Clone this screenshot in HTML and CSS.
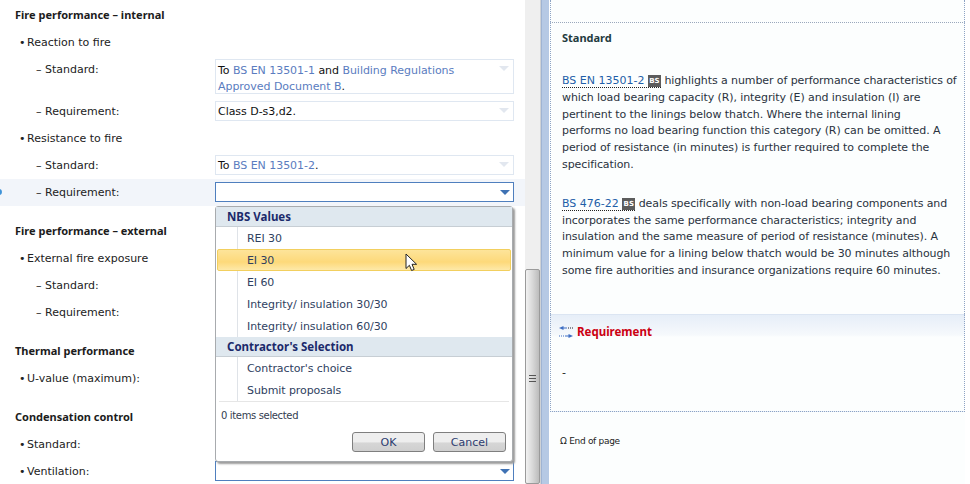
FILE: index.html
```html
<!DOCTYPE html>
<html lang="en">
<head>
<meta charset="utf-8">
<title>Fire performance</title>
<link rel="stylesheet" href="styles.css">
</head>
<body>
<div class="app">
  <main class="form-pane">
    <section class="group first">
      <h2 class="row title">Fire performance – internal</h2>
      <div class="row"><span class="lvl1"><i class="dot">•</i> Reaction to fire</span></div>
      <div class="row"><span class="lvl2">– Standard:</span><div class="field tall">
        <span>To <a>BS EN 13501-1</a> and <a>Building Regulations Approved Document B</a>.</span><i class="arrow"></i></div></div>
      <div class="row"><span class="lvl2">– Requirement:</span><div class="field"><span>Class D-s3,d2.</span><i class="arrow"></i></div></div>
      <div class="row"><span class="lvl1"><i class="dot">•</i> Resistance to fire</span></div>
      <div class="row"><span class="lvl2">– Standard:</span><div class="field"><span>To <a>BS EN 13501-2</a>.</span><i class="arrow"></i></div></div>
      <div class="row active"><b class="marker"></b><span class="lvl2">– Requirement:</span><div class="field focus"><i class="arrow"></i></div></div>
    </section>
    <section class="group">
      <h2 class="row title">Fire performance – external</h2>
      <div class="row"><span class="lvl1"><i class="dot">•</i> External fire exposure</span></div>
      <div class="row"><span class="lvl2">– Standard:</span></div>
      <div class="row"><span class="lvl2">– Requirement:</span></div>
    </section>
    <section class="group">
      <h2 class="row title">Thermal performance</h2>
      <div class="row"><span class="lvl1"><i class="dot">•</i> U-value (maximum):</span></div>
    </section>
    <section class="group">
      <h2 class="row title">Condensation control</h2>
      <div class="row"><span class="lvl1"><i class="dot">•</i> Standard:</span></div>
      <div class="row"><span class="lvl1"><i class="dot">•</i> Ventilation:</span><div class="field focus"><i class="arrow"></i></div></div>
    </section>

    <div class="popup">
      <div class="pop-head">NBS Values</div>
      <ul class="pop-list">
        <li>REI 30</li>
        <li class="hot">EI 30</li>
        <li>EI 60</li>
        <li>Integrity/ insulation 30/30</li>
        <li>Integrity/ insulation 60/30</li>
      </ul>
      <div class="pop-head">Contractor's Selection</div>
      <ul class="pop-list">
        <li>Contractor's choice</li>
        <li>Submit proposals</li>
      </ul>
      <div class="pop-foot">
        <div class="count">0 items selected</div>
        <div class="buttons"><button>OK</button><button>Cancel</button></div>
      </div>
    </div>
    <svg class="cursor" width="13" height="20" viewBox="0 0 13 20"><path d="M1 1v14.500l3.400-3.200 2.200 5.200 2.600-1.100-2.200-5.100h4.600z" fill="#fff" stroke="#222" stroke-width="1"/></svg>
  </main>

  <div class="track"><div class="thumb"><span class="grip"></span></div></div>
  <div class="splitter"></div>

  <aside class="doc-pane">
    <div class="panel spacer"></div>
    <div class="panel std">
      <h3>Standard</h3>
      <p><a class="ref">BS EN 13501-2 <span class="bs">BS</span></a> highlights a number of performance characteristics of<br>which load bearing capacity (R), integrity (E) and insulation (I) are<br>pertinent to the linings below thatch. Where the internal lining<br>performs no load bearing function this category (R) can be omitted. A<br>period of resistance (in minutes) is further required to complete the<br>specification.</p>
      <p><a class="ref">BS 476-22 <span class="bs">BS</span></a> deals specifically with non-load bearing components and<br>incorporates the same performance characteristics; integrity and<br>insulation and the same measure of period of resistance (minutes). A<br>minimum value for a lining below thatch would be 30 minutes although<br>some fire authorities and insurance organizations require 60 minutes.</p>
    </div>
    <div class="panel req">
      <div class="req-head">
        <svg width="14" height="12" viewBox="0 0 14 12"><path d="M4.500 0 0 2l4.500 2V2.500H8v-1H4.500z" fill="#3f6fc4"/><path d="M9 2h1m1 0h1m1 0h1" stroke="#223" stroke-width="1"/><path d="M9.500 8l4.500 2-4.500 2v-1.500H6v-1h3.500z" fill="#3f6fc4"/><path d="M0 10h1m1 0h1m1 0h1" stroke="#3f6fc4" stroke-width="1"/></svg>
        <span>Requirement</span>
      </div>
      <p class="dash">-</p>
    </div>
    <div class="eop">Ω End of page</div>
  </aside>
</div>
</body>
</html>
```
FILE: styles.css
```css
* { box-sizing: border-box; }
html, body { margin: 0; height: 484px; overflow: hidden; background: #fff; }
body { font-family: "DejaVu Sans", sans-serif; font-size: 11px; color: #222; }
.app { display: flex; height: 484px; }

.form-pane { position: relative; flex: 0 0 525px; height: 484px; overflow: hidden; background: #fff; padding-top: 2px; }
.group { margin-top: 12px; }
.group.first { margin-top: 0; }
.row { position: relative; display: grid; grid-template-columns: 215px 299px; padding: 4px 0 3px; min-height: 27px; margin: 0; line-height: 20px; }
.row.active { background: #f2f5fa; }
.row.title { display: block; font-family: "Noto Sans", sans-serif; font-size: 11px; font-weight: bold; padding: 3px 0 4px 15px; color: #1c1c1c; }
.lvl1 { padding-left: 19px; }
.lvl2 { padding-left: 36px; }
.dot { font-style: normal; margin-right: -2px; }
.marker { position: absolute; left: -3px; top: 10px; width: 5px; height: 6px; border-radius: 50%; background: #3f93d8; }

.field { position: relative; height: 20px; margin: -1px 0 1px; border: 1px solid #dfe7f1; padding: 0 20px 0 2px; line-height: 20px; letter-spacing: -0.04px; color: #111; background: #fff; }
.field.tall { height: 35px; line-height: 16px; padding-top: 3px; }
.field a { color: #5a7cc0; }
.field.focus { border-color: #4f7fbe; }
.arrow { position: absolute; right: 4px; top: 6px; width: 0; height: 0; border: 5px solid transparent; border-top: 5px solid #e2e7ef; border-bottom: 0; }
.field.focus .arrow { border-top-color: #3f72b4; right: 3px; top: 7px; }

.popup { position: absolute; left: 215px; top: 206px; width: 298px; height: 256px; background: #fff; border: 1px solid #a8abae; border-radius: 3px; box-shadow: 2px 2px 2px #9c9c9c; color: #2f3f5f; }
.pop-head { height: 20px; padding-left: 11px; line-height: 20px; background: #dfe8ef; border-bottom: 1px solid #c7ced4; font-family: "Noto Sans", sans-serif; font-size: 11.5px; font-weight: bold; color: #1b2a6b; }
.pop-list { list-style: none; margin: 0; padding: 0; }
.pop-list li { position: relative; height: 22px; margin-left: 21px; padding-left: 9px; line-height: 24px; letter-spacing: -0.08px; border-left: 1px solid #dfe3e8; }
.pop-list li.hot { margin-left: 1px; margin-right: 1px; padding-left: 29px; line-height: 22px; border: 1px solid #f2cf5e; border-radius: 2px; background: linear-gradient(#fde49a, #fdd97a 60%, #fee9a8); }
.pop-foot { margin: 0 3px; border-top: 1px solid #e6e6e6; padding-top: 6px; }
.count { font-size: 10px; padding-left: 2px; height: 16px; line-height: 16px; letter-spacing: -0.35px; color: #333d50; }
.buttons { display: flex; justify-content: flex-end; gap: 8px; margin-top: 8px; padding-right: 3px; }
.buttons button { width: 73px; height: 20px; padding: 0; font: 11px "DejaVu Sans", sans-serif; color: #2c3c70; border: 1px solid #7f7f7f; border-radius: 3px; background: linear-gradient(#eee, #eee 50%, #d6d6d6 55%, #cfcfcf); }
.cursor { position: absolute; left: 405px; top: 253px; }

.track { position: relative; flex: 0 0 16px; background: #efefef; border-right: 1px solid #cfd2d6; }
.thumb { position: absolute; left: 0; top: 269px; width: 15px; height: 215px; border: 1px solid #9a9a9a; border-radius: 2px; background: linear-gradient(90deg, #f2f2f2, #d8d8d8 50%, #bcbcbc); display: flex; align-items: center; justify-content: center; padding-top: 4px; }
.grip { width: 7px; height: 7px; border-top: 1px solid #555; border-bottom: 1px solid #555; background: linear-gradient(#555, #555) center/100% 1px no-repeat; }
.splitter { flex: 0 0 8px; background: #b6c9e4; border-left: 1px solid #9fb4d3; }

.doc-pane { flex: 0 0 auto; width: 415px; margin-left: 1px; display: flex; flex-direction: column; height: 484px; background: #fcfefe; }
.panel { border-left: 1px dotted #8da3c4; border-right: 1px dotted #8da3c4; }
.spacer { height: 22px; }
.std { border-top: 1px dotted #9aa8bc; height: 292px; padding: 7px 6px 0 11px; }
.std h3 { margin: 0; font-family: "Noto Sans", sans-serif; font-size: 11px; line-height: 16px; color: #1f3b3f; }
.std p { margin: 27px 0 0; line-height: 16.8px; letter-spacing: -0.09px; white-space: nowrap; color: #2a3340; }
.std p + p { margin-top: 22px; }
.ref { color: #1f5fa8; letter-spacing: 0; border-bottom: 1px dotted #222; }
.bs { display: inline-block; width: 13px; height: 12px; background: #5c5c5c; color: #fff; font-size: 7px; font-weight: bold; line-height: 12px; text-align: center; vertical-align: 1px; }
.req { height: 98px; border-top: 1px solid #dbe5f2; border-bottom: 1px dotted #8da3c4; background: linear-gradient(#e6eef8, #f6f9fc 20px, #fcfefe 22px); }
.req-head { display: flex; align-items: center; gap: 4px; padding: 0 0 0 8px; height: 33px; font-family: "Noto Sans", sans-serif; font-size: 11.5px; font-weight: bold; color: #cc0011; }
.dash { margin: 17px 0 0 11px; line-height: 16px; }
.eop { margin: 21px 0 0 10px; font-size: 9px; line-height: 16px; letter-spacing: -0.3px; color: #222; }
```
